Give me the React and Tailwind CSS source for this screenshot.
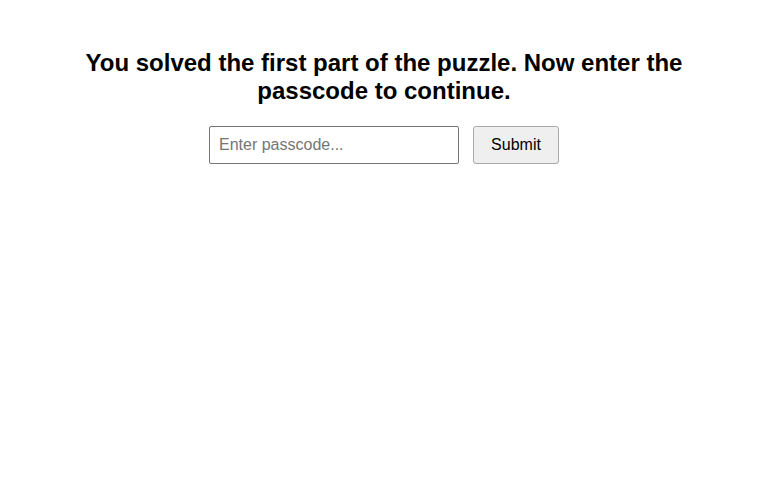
export default function App() {
  return (
    <div className="min-h-screen bg-white px-5 pt-[49px] text-center" style={{ fontFamily: '"Liberation Sans", Arial, sans-serif' }}>
      <h1 className="mx-auto m-0 max-w-[640px] text-[24px] leading-[28px] font-bold text-black">
        You solved the first part of the puzzle. Now enter the passcode to continue.
      </h1>
      <div className="mt-[21px] flex justify-center items-center gap-[14px]">
        <input
          type="text"
          placeholder="Enter passcode..."
          className="h-[38px] w-[250px] rounded-[2px] border border-[#767676] bg-white px-[9px] text-[16px] text-black placeholder:text-[#757575] outline-none"
        />
        <button className="h-[38px] w-[86px] rounded-[3px] border border-[#a9a9a9] bg-[#efefef] text-[16px] text-black">
          Submit
        </button>
      </div>
    </div>
  );
}
